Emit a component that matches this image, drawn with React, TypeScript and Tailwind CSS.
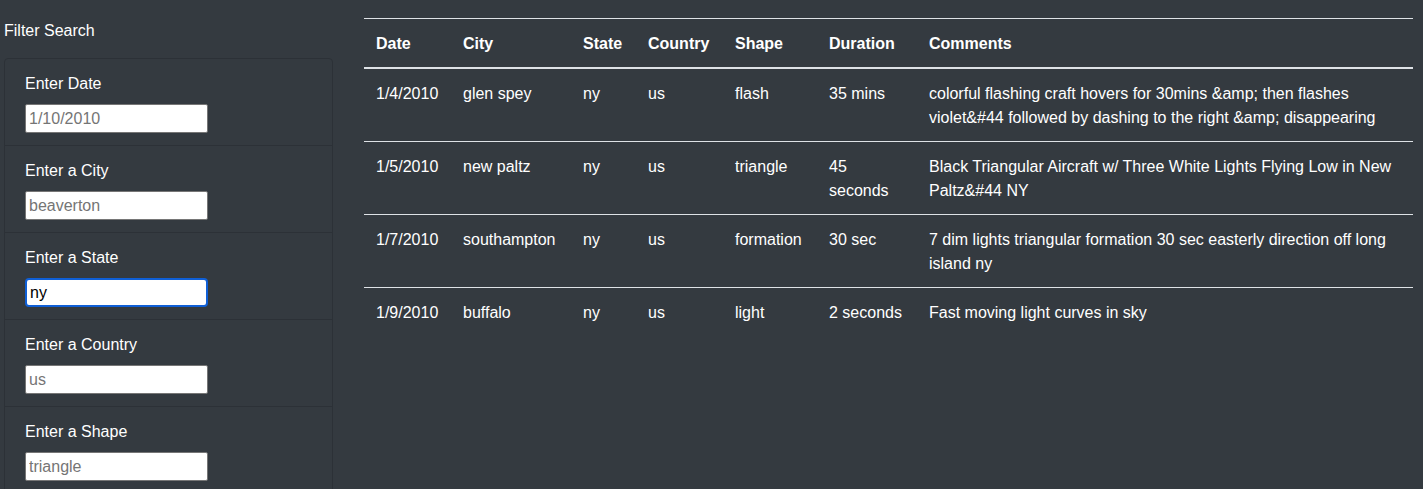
import { useState } from "react";

type Sighting = {
  datetime: string;
  city: string;
  state: string;
  country: string;
  shape: string;
  durationMinutes: string;
  comments: string;
};

const DATA: Sighting[] = [
  {
    datetime: "1/4/2010",
    city: "glen spey",
    state: "ny",
    country: "us",
    shape: "flash",
    durationMinutes: "35 mins",
    comments:
      "colorful flashing craft hovers for 30mins &amp; then flashes violet&#44 followed by dashing to the right &amp; disappearing",
  },
  {
    datetime: "1/5/2010",
    city: "new paltz",
    state: "ny",
    country: "us",
    shape: "triangle",
    durationMinutes: "45 seconds",
    comments: "Black Triangular Aircraft w/ Three White Lights Flying Low in New Paltz&#44 NY",
  },
  {
    datetime: "1/7/2010",
    city: "southampton",
    state: "ny",
    country: "us",
    shape: "formation",
    durationMinutes: "30 sec",
    comments: "7 dim lights triangular formation 30 sec easterly direction off long island ny",
  },
  {
    datetime: "1/9/2010",
    city: "buffalo",
    state: "ny",
    country: "us",
    shape: "light",
    durationMinutes: "2 seconds",
    comments: "Fast moving light curves in sky",
  },
];

const FILTERS = [
  { id: "datetime", label: "Enter Date", placeholder: "1/10/2010" },
  { id: "city", label: "Enter a City", placeholder: "beaverton" },
  { id: "state", label: "Enter a State", placeholder: "ny" },
  { id: "country", label: "Enter a Country", placeholder: "us" },
  { id: "shape", label: "Enter a Shape", placeholder: "triangle" },
];

const COLS = [
  { key: "datetime", label: "Date", w: "w-[87px]" },
  { key: "city", label: "City", w: "w-[120px]" },
  { key: "state", label: "State", w: "w-[65px]" },
  { key: "country", label: "Country", w: "w-[87px]" },
  { key: "shape", label: "Shape", w: "w-[94px]" },
  { key: "durationMinutes", label: "Duration", w: "w-[100px]" },
  { key: "comments", label: "Comments", w: "" },
] as const;

export default function App() {
  const [values, setValues] = useState<Record<string, string>>({ state: "ny" });

  return (
    <div className="min-h-[489px] bg-[#343a40] text-white font-['Liberation_Sans',Arial,sans-serif] text-base leading-6 flex">
      {/* Sidebar */}
      <aside className="w-[333px] shrink-0 pl-1 pt-[19px]">
        <p className="mb-[15px]">Filter Search</p>
        <ul className="border border-[#2c3137] rounded-[4px]">
          {FILTERS.map((f, i) => (
            <li
              key={f.id}
              className={`px-5 pt-[13px] pb-3 ${i < FILTERS.length - 1 ? "border-b border-[#2c3137]" : ""}`}
            >
              <label htmlFor={f.id} className="block mb-2">
                {f.label}
              </label>
              <input
                id={f.id}
                type="text"
                placeholder={f.placeholder}
                value={values[f.id] ?? ""}
                onChange={(e) => setValues((v) => ({ ...v, [f.id]: e.target.value }))}
                className={`block w-[183px] h-[29px] bg-white text-black px-[3px] text-base placeholder:text-[#757575] rounded-[2px] ${
                  f.id === "state"
                    ? "border-2 border-[#0f5fd6] rounded-[4px] outline-none"
                    : "border border-[#767676]"
                }`}
              />
            </li>
          ))}
        </ul>
      </aside>

      {/* Table */}
      <main className="ml-[31px] w-[1049px] pt-[18px]">
        <table className="w-full table-fixed border-collapse text-left">
          <thead>
            <tr className="border-t border-[#dee2e6]">
              {COLS.map((c) => (
                <th
                  key={c.key}
                  className={`${c.w} pt-[13px] pb-[11px] px-3 font-bold align-bottom border-b-2 border-[#dee2e6]`}
                >
                  {c.label}
                </th>
              ))}
            </tr>
          </thead>
          <tbody>
            {DATA.map((row, i) => (
              <tr key={i} className={i < DATA.length - 1 ? "border-b border-[#dee2e6]" : ""}>
                {COLS.map((c) => (
                  <td key={c.key} className="pt-[13px] pb-[11px] px-3 align-top">
                    {row[c.key]}
                  </td>
                ))}
              </tr>
            ))}
          </tbody>
        </table>
      </main>
    </div>
  );
}
